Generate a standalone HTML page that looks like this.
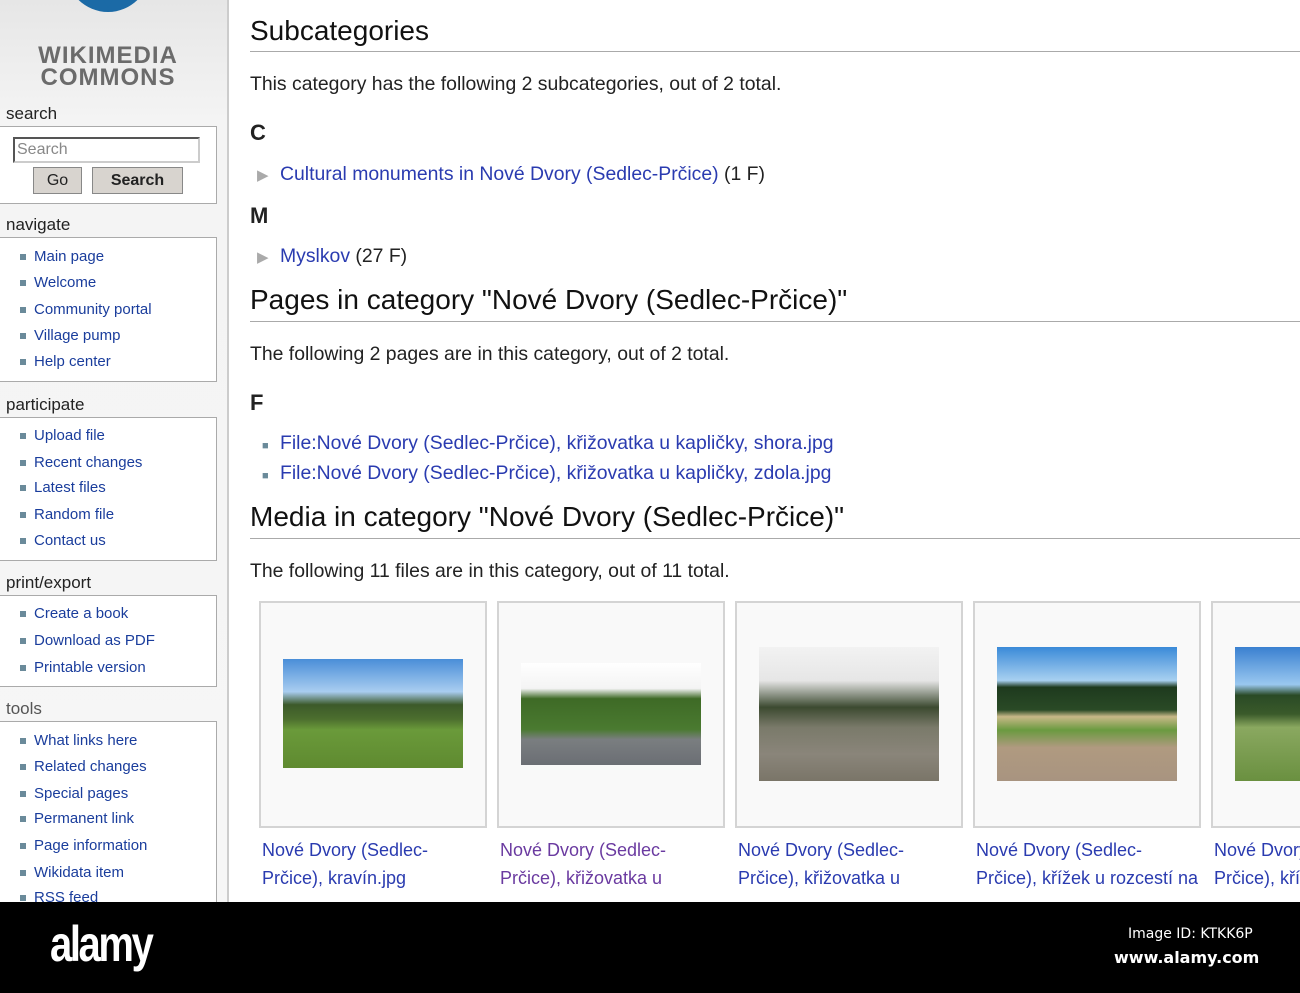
<!DOCTYPE html>
<html><head><meta charset="utf-8"><style>
*{margin:0;padding:0;box-sizing:border-box}
body{width:1300px;height:993px;overflow:hidden;position:relative;background:#fff;font-family:"Liberation Sans",sans-serif;color:#222}
.a{position:absolute;white-space:nowrap}
#side{position:absolute;left:0;top:0;width:229px;height:902px;background:linear-gradient(#e6e6e6,#f4f4f4 120px,#f6f6f6);border-right:2px solid #ccc}
.h{position:absolute;left:6px;font-size:17px;color:#222}
.box{position:absolute;left:0;width:217px;background:#fff;border:1px solid #aaa;border-left:none}
.li{position:absolute;left:20px;font-size:15px;color:#1a3d9c}
.li:before{content:"";position:absolute;left:0;top:6px;width:6px;height:6px;background:#6a8a9a}
.li span{margin-left:14px}
.h2{position:absolute;left:250px;right:0;font-size:28px;color:#111;border-bottom:1px solid #aaa}
.t{font-size:19.4px;color:#222}
.lk{color:#2a3bb0}
.g{position:absolute;top:601px;width:228px;height:227px;background:#f9f9f9;border:2px solid #d4d4d4}
.ph{position:absolute}
.cap{position:absolute;top:836px;font-size:18px;color:#2a3bb0;line-height:28px;white-space:nowrap}
.tri{color:#aaa;font-size:15px;display:inline-block;width:23px}
</style></head><body>
<div id="side">
 <svg class="a" style="left:40px;top:0" width="140" height="45"><circle cx="68" cy="-30" r="42" fill="#1b6aa6"/><circle cx="68" cy="-30" r="26" fill="#fff"/><path d="M68 8 L60 -6 L76 -6Z M50 2 L40 -10 L54 -12Z M86 2 L96 -10 L82 -12Z" fill="#1b6aa6"/></svg>
 <div class="a" style="left:28px;top:45px;font-size:24px;font-weight:bold;color:#6b6b6b;letter-spacing:1px;line-height:22px;text-align:center;width:160px">WIKIMEDIA<br>COMMONS</div>
 <div class="h" style="top:104px">search</div>
 <div class="box" style="top:126px;height:78px"></div>
 <div class="a" style="left:13px;top:137px;width:187px;height:26px;border:2px solid #555;border-right-color:#ccc;border-bottom-color:#ccc;background:#fff;font-size:16px;color:#888;padding-left:2px;line-height:22px">Search</div>
 <div class="a" style="left:33px;top:167px;width:49px;height:27px;background:#d8d4cf;border:1px solid #888;font-size:16px;text-align:center;line-height:26px">Go</div>
 <div class="a" style="left:92px;top:167px;width:91px;height:27px;background:#d8d4cf;border:1px solid #888;font-size:16px;font-weight:bold;text-align:center;line-height:26px">Search</div>
 <div class="h" style="top:215px">navigate</div>
 <div class="box" style="top:237px;height:145px"></div>
 <div class="li" style="top:248px"><span>Main page</span></div>
 <div class="li" style="top:274px"><span>Welcome</span></div>
 <div class="li" style="top:301px"><span>Community portal</span></div>
 <div class="li" style="top:327px"><span>Village pump</span></div>
 <div class="li" style="top:353px"><span>Help center</span></div>
 <div class="h" style="top:395px">participate</div>
 <div class="box" style="top:417px;height:144px"></div>
 <div class="li" style="top:427px"><span>Upload file</span></div>
 <div class="li" style="top:454px"><span>Recent changes</span></div>
 <div class="li" style="top:479px"><span>Latest files</span></div>
 <div class="li" style="top:506px"><span>Random file</span></div>
 <div class="li" style="top:532px"><span>Contact us</span></div>
 <div class="h" style="top:573px">print/export</div>
 <div class="box" style="top:595px;height:92px"></div>
 <div class="li" style="top:605px"><span>Create a book</span></div>
 <div class="li" style="top:632px"><span>Download as PDF</span></div>
 <div class="li" style="top:659px"><span>Printable version</span></div>
 <div class="h" style="top:699px;color:#555">tools</div>
 <div class="box" style="top:721px;height:200px"></div>
 <div class="li" style="top:732px"><span>What links here</span></div>
 <div class="li" style="top:758px"><span>Related changes</span></div>
 <div class="li" style="top:785px"><span>Special pages</span></div>
 <div class="li" style="top:810px"><span>Permanent link</span></div>
 <div class="li" style="top:837px"><span>Page information</span></div>
 <div class="li" style="top:864px"><span>Wikidata item</span></div>
 <div class="li" style="top:889px"><span>RSS feed</span></div>
</div>

<div class="h2" style="top:15px;height:37px">Subcategories</div>
<div class="a t" style="left:250px;top:73px">This category has the following 2 subcategories, out of 2 total.</div>
<div class="a" style="left:250px;top:120px;font-size:22px;font-weight:bold">C</div>
<div class="a t" style="left:257px;top:163px"><span class="tri">▶</span><span class="lk">Cultural monuments in Nové Dvory (Sedlec-Prčice)</span> (1 F)</div>
<div class="a" style="left:250px;top:203px;font-size:22px;font-weight:bold">M</div>
<div class="a t" style="left:257px;top:245px"><span class="tri">▶</span><span class="lk">Myslkov</span> (27 F)</div>
<div class="h2" style="top:284px;height:38px">Pages in category "Nové Dvory (Sedlec-Prčice)"</div>
<div class="a t" style="left:250px;top:343px">The following 2 pages are in this category, out of 2 total.</div>
<div class="a" style="left:250px;top:390px;font-size:22px;font-weight:bold">F</div>
<div class="a t" style="left:262px;top:432px"><span style="color:#6a8a9a;font-size:11px;display:inline-block;width:18px">■</span><span class="lk">File:Nové Dvory (Sedlec-Prčice), křižovatka u kapličky, shora.jpg</span></div>
<div class="a t" style="left:262px;top:462px"><span style="color:#6a8a9a;font-size:11px;display:inline-block;width:18px">■</span><span class="lk">File:Nové Dvory (Sedlec-Prčice), křižovatka u kapličky, zdola.jpg</span></div>
<div class="h2" style="top:501px;height:38px">Media in category "Nové Dvory (Sedlec-Prčice)"</div>
<div class="a t" style="left:250px;top:560px">The following 11 files are in this category, out of 11 total.</div>

<div class="g" style="left:259px"></div>
<div class="g" style="left:497px"></div>
<div class="g" style="left:735px"></div>
<div class="g" style="left:973px"></div>
<div class="g" style="left:1211px;width:120px"></div>
<div class="ph" style="left:283px;top:659px;width:180px;height:109px;background:linear-gradient(#4a8ed8,#a9cdf0 30%,#3c5a2a 42%,#4c6e2e 55%,#6a9a3a 65%,#5f8a30)"></div>
<div class="ph" style="left:521px;top:663px;width:180px;height:102px;background:linear-gradient(#fff,#f4f4f4 25%,#3e6a26 35%,#4a7a30 65%,#7a7e80 75%,#6b6e74)"></div>
<div class="ph" style="left:759px;top:647px;width:180px;height:134px;background:linear-gradient(#f2f2f2,#e6e6e6 25%,#3c4a30 45%,#7a7a6a 60%,#8a857a 80%,#7a7568)"></div>
<div class="ph" style="left:997px;top:647px;width:180px;height:134px;background:linear-gradient(#3a8ad8,#a8d0f0 25%,#1e3a1e 30%,#2a4a26 47%,#c8b888 52%,#6a9a40 62%,#b09a80 75%,#a89480)"></div>
<div class="ph" style="left:1235px;top:647px;width:65px;height:134px;background:linear-gradient(#3a80d0,#9ac8f0 28%,#2a4a26 36%,#3a5a2a 50%,#8aa860 60%,#6a9040)"></div>

<div class="cap" style="left:262px">Nové Dvory (Sedlec-<br>Prčice), kravín.jpg</div>
<div class="cap" style="left:500px;color:#6a3aa0">Nové Dvory (Sedlec-<br>Prčice), křižovatka u</div>
<div class="cap" style="left:738px">Nové Dvory (Sedlec-<br>Prčice), křižovatka u</div>
<div class="cap" style="left:976px">Nové Dvory (Sedlec-<br>Prčice), křížek u rozcestí na</div>
<div class="cap" style="left:1214px">Nové Dvory<br>Prčice), kří</div>

<div class="a" style="left:0;top:902px;width:1300px;height:91px;background:#000"></div>
<div class="a" style="left:50px;top:915px;font-size:50px;font-weight:bold;color:#fff;letter-spacing:-3px;transform:scaleX(0.8);transform-origin:left">alamy</div>
<div class="a" style="left:1128px;top:926px;font-size:14px;color:#fff;font-family:'DejaVu Sans',sans-serif">Image ID: KTKK6P</div>
<div class="a" style="left:1114px;top:948px;font-size:16px;font-weight:bold;color:#fff;font-family:'DejaVu Sans',sans-serif">www.alamy.com</div>
</body></html>
